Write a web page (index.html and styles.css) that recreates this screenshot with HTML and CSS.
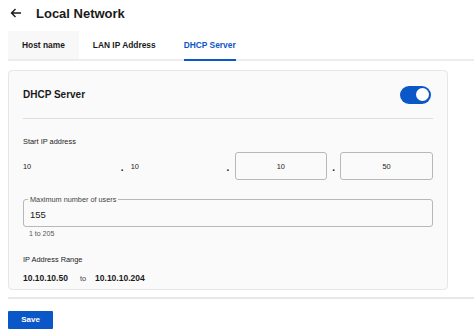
FILE: index.html
```html
<!DOCTYPE html>
<html lang="en">
<head>
  <meta charset="UTF-8">
  <meta name="viewport" content="width=device-width, initial-scale=1">
  <title>Local Network</title>
  <link rel="stylesheet" href="styles.css">
</head>
<body>

  <div class="page-header">
    <svg class="back-icon" width="12" height="12" viewBox="0 0 12 12">
      <path d="M11 6H1.5M5.5 2 1.5 6l4 4" fill="none" stroke="#1a1a1a" stroke-width="1.4"/>
    </svg>
    <h1 class="page-title">Local Network</h1>
  </div>

  <div class="tabs">
    <div class="tab tab-hover"><span>Host name</span></div>
    <div class="tab"><span>LAN IP Address</span></div>
    <div class="tab tab-active"><span>DHCP Server</span></div>
  </div>

  <div class="card">
    <div class="card-header">
      <div class="card-title">DHCP Server</div>
      <div class="toggle"><div class="toggle-knob"></div></div>
    </div>

    <div class="field-label start-label">Start IP address</div>
    <div class="ip-row">
      <div class="ip-seg ip-fixed">10</div>
      <div class="ip-dot">.</div>
      <div class="ip-seg ip-fixed ip-fixed-2">10</div>
      <div class="ip-dot">.</div>
      <div class="ip-seg ip-box">10</div>
      <div class="ip-dot">.</div>
      <div class="ip-seg ip-box">50</div>
    </div>

    <div class="outlined">
      <span class="outlined-label">Maximum number of users</span>
      <div class="outlined-value">155</div>
    </div>
    <div class="helper">1 to 205</div>

    <div class="field-label range-label">IP Address Range</div>
    <div class="range">
      <span class="range-ip">10.10.10.50</span>
      <span class="range-to">to</span>
      <span class="range-ip">10.10.10.204</span>
    </div>
  </div>

  <div class="footer">
    <button class="save-btn">Save</button>
  </div>

</body>
</html>
```

FILE: styles.css
```css
body {
  margin: 0;
  padding: 0;
  font-family: "Liberation Sans", Arial, sans-serif;
  color: #1a1a1a;
  background: #fff;
  overflow: hidden;
}

.page-header {
  height: 26px;
  display: flex;
  align-items: center;
  padding-left: 10px;
}

.back-icon {
  display: block;
  margin-right: 14px;
}

.page-title {
  margin: 0;
  font-size: 13px;
  font-weight: 700;
}

.tabs {
  margin-left: 8px;
  margin-top: 5px;
  height: 28px;
  display: flex;
  border-bottom: 2px solid #ececec;
}

.tab {
  padding: 0 14px;
  font-size: 8.4px;
  font-weight: 700;
  display: flex;
  align-items: stretch;
}

.tab span {
  display: flex;
  align-items: center;
  border-bottom: 2px solid transparent;
  margin-bottom: -2px;
}

.tab-hover {
  background: #f8f8f8;
}

.tab-active {
  color: #0b57c8;
}

.tab-active span {
  border-bottom-color: #0b57c8;
}

.card {
  margin: 9px 26px 0 8px;
  padding: 0 14px 5px;
  background: #fafafa;
  border: 1px solid #e6e6e6;
  border-radius: 4px;
}

.card-header {
  height: 47px;
  display: flex;
  align-items: center;
  justify-content: space-between;
  border-bottom: 1px solid #dedede;
}

.card-title {
  font-size: 10px;
  font-weight: 700;
}

.toggle {
  width: 31px;
  height: 18px;
  border-radius: 9px;
  background: #0b57c8;
  display: flex;
  align-items: center;
  justify-content: flex-end;
  padding-right: 2px;
  box-sizing: border-box;
  margin-right: 2px;
}

.toggle-knob {
  width: 13px;
  height: 13px;
  border-radius: 50%;
  background: #fff;
}

.field-label {
  font-size: 7.4px;
  line-height: 12px;
}

.start-label {
  margin-top: 17px;
}

.ip-row {
  margin-top: 4px;
  height: 28px;
  display: grid;
  grid-template-columns: 1fr 13px 1fr 13px 1fr 13px 1fr;
  font-size: 7.4px;
}

.ip-seg {
  display: flex;
  align-items: center;
}

.ip-fixed-2 {
  padding-left: 2px;
}

.ip-box {
  justify-content: center;
  border: 1px solid #b8b8b8;
  border-radius: 3px;
  background: #fafafa;
}

.ip-dot {
  display: flex;
  align-items: center;
  justify-content: center;
  font-size: 10px;
  font-weight: 700;
  padding-top: 2px;
}

.outlined {
  position: relative;
  margin-top: 19px;
  height: 28px;
  border: 1px solid #b8b8b8;
  border-radius: 3px;
  box-sizing: border-box;
  padding-left: 6px;
  display: flex;
  align-items: center;
}

.outlined-label {
  position: absolute;
  top: -5px;
  left: 4px;
  padding: 0 2px;
  background: #fafafa;
  font-size: 7.3px;
  line-height: 9px;
  color: #444;
}

.outlined-value {
  font-size: 9.5px;
  padding-top: 3px;
}

.helper {
  margin-top: 1px;
  padding-left: 6px;
  font-size: 7px;
  line-height: 12px;
  color: #555;
}

.range-label {
  margin-top: 14px;
}

.range {
  margin-top: 6px;
  height: 12px;
  display: flex;
  align-items: center;
  font-size: 8.5px;
}

.range-ip {
  font-weight: 700;
}

.range-to {
  margin: 0 9px 0 12px;
  font-size: 7.4px;
  color: #444;
}

.footer {
  margin: 7px 0 0 8px;
  border-top: 2px solid #e8e8e8;
  padding-top: 9px;
}

.save-btn {
  width: 45px;
  height: 18px;
  border: none;
  border-radius: 1px;
  background: #0b57c8;
  color: #fff;
  font-family: "Liberation Sans", Arial, sans-serif;
  font-size: 8px;
  font-weight: 700;
  padding: 0;
}
```
